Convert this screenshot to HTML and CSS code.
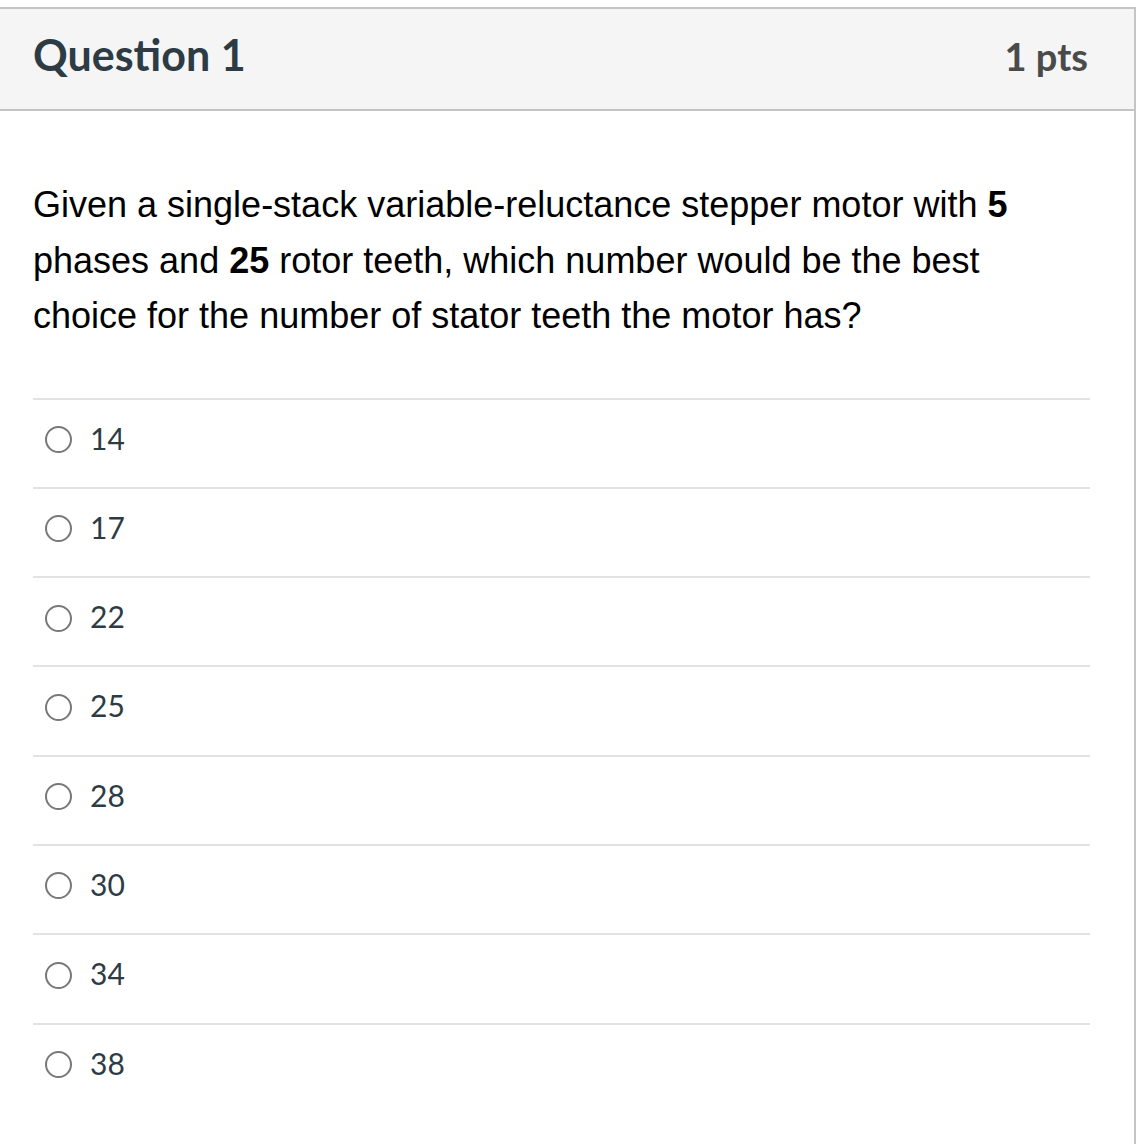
FILE: index.html
```html
<!DOCTYPE html>
<html>
<head>
<meta charset="utf-8">
<link rel="stylesheet" href="styles.css">
</head>
<body>
<div class="card">
  <div class="header">
    <span class="qname">Question 1</span>
    <span class="pts">1 pts</span>
  </div>
  <div class="content">
    <div class="qtext">Given a single-stack variable-reluctance stepper motor with <b>5</b> phases and <b>25</b> rotor teeth, which number would be the best choice for the number of stator teeth the motor has?</div>
    <div class="answers">
      <div class="answer"><span class="radio"></span><span class="label">14</span></div>
      <div class="answer"><span class="radio"></span><span class="label">17</span></div>
      <div class="answer"><span class="radio"></span><span class="label">22</span></div>
      <div class="answer"><span class="radio"></span><span class="label">25</span></div>
      <div class="answer"><span class="radio"></span><span class="label">28</span></div>
      <div class="answer"><span class="radio"></span><span class="label">30</span></div>
      <div class="answer"><span class="radio"></span><span class="label">34</span></div>
      <div class="answer"><span class="radio"></span><span class="label">38</span></div>
    </div>
  </div>
</div>
</body>
</html>
```
FILE: styles.css
```css
html, body {
  margin: 0;
  padding: 0;
  background: #ffffff;
  overflow: hidden;
}
.card {
  box-sizing: border-box;
  margin: 7px 0 0 -10px;
  width: 1146px;
  height: 1200px;
  border: 2px solid #c4c4c4;
  border-bottom: none;
  background: #fff;
}
.header {
  box-sizing: border-box;
  height: 102px;
  padding: 21px 46px 0 41px;
  background: #f5f5f5;
  border-bottom: 2px solid #c4c4c4;
  display: flex;
  justify-content: space-between;
  align-items: baseline;
  font-family: Lato, "Liberation Sans", sans-serif;
  font-weight: bold;
}
.qname {
  color: #2d3b45;
  font-size: 43px;
  line-height: 50px;
}
.pts {
  color: #4a4a4a;
  font-size: 38px;
  line-height: 45px;
}
.content {
  padding: 66px 44px 0 41px;
}
.qtext {
  font-family: "Liberation Sans", Arial, sans-serif;
  font-size: 36px;
  line-height: 55.5px;
  color: #000;
  margin-bottom: 54px;
}
.qtext b {
  font-weight: bold;
}
.answers {
  display: flex;
  flex-direction: column;
}
.answer {
  box-sizing: border-box;
  height: 89.3px;
  border-top: 2px solid #e2e2e2;
  padding-top: 18px;
  display: flex;
  align-items: flex-start;
}
.radio {
  box-sizing: border-box;
  width: 27px;
  height: 27px;
  margin: 8.5px 0 0 12px;
  border: 2.5px solid #787878;
  border-radius: 50%;
  flex: none;
}
.label {
  margin-left: 18px;
  font-family: Lato, "Liberation Sans", sans-serif;
  font-size: 30px;
  line-height: 40px;
  color: #2d3b45;
}
```
